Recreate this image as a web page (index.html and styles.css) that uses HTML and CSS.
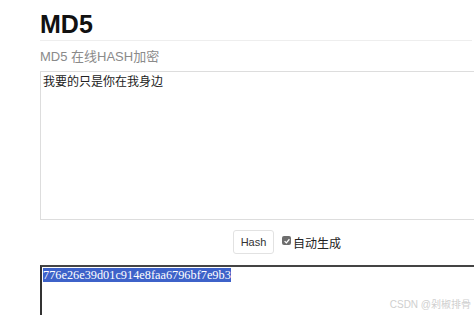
FILE: index.html
```html
<!DOCTYPE html>
<html>
<head>
<meta charset="utf-8">
<link rel="stylesheet" href="styles.css">
</head>
<body>
<div class="page">
  <h1 class="title">MD5</h1>
  <div class="rule"></div>
  <p class="subtitle">MD5 在线HASH加密</p>
  <div class="input-box">我要的只是你在我身边</div>
  <div class="controls">
    <button class="btn">Hash</button>
    <label class="auto"><span class="check"><svg viewBox="0 0 10 10" width="8" height="8"><path d="M2 5.2 L4.2 7.3 L8 2.8" fill="none" stroke="#fff" stroke-width="1.6"/></svg></span>自动生成</label>
  </div>
  <div class="output-box"><span class="sel">776e26e39d01c914e8faa6796bf7e9b3</span></div>
</div>
<div class="watermark">CSDN @剁椒排骨</div>
</body>
</html>
```
FILE: styles.css
```css
html, body {
  margin: 0;
  padding: 0;
  background: #fff;
  overflow: hidden;
  width: 474px;
  height: 315px;
}
body {
  position: relative;
  font-family: "Liberation Sans", "Noto Sans CJK SC", sans-serif;
}
.page {
  padding-left: 40px;
  display: flex;
  flex-direction: column;
}
.title {
  margin: 11px 0 0 0;
  font-size: 25px;
  line-height: 26px;
  font-weight: bold;
  color: #111;
}
.rule {
  margin-top: 3px;
  width: 432px;
  height: 1px;
  background: #eeeeee;
}
.subtitle {
  margin: 8px 0 0 0;
  font-size: 13px;
  line-height: 16px;
  color: #8a8a8a;
}
.input-box {
  margin-top: 6px;
  width: 440px;
  border: 1px solid #dddddd;
  border-right: none;
  padding: 3px 2px;
  box-sizing: border-box;
  height: 149px;
  font-family: "Liberation Serif", "Noto Sans CJK SC", serif;
  font-size: 12px;
  line-height: 14px;
  color: #222;
}
.controls {
  display: flex;
  align-items: center;
  margin-top: 10px;
  padding-left: 193px;
  height: 24px;
}
.btn {
  width: 41px;
  height: 24px;
  padding: 0;
  border: 1px solid #e2e2e2;
  border-radius: 3px;
  background: #fff;
  font-family: "Liberation Sans", sans-serif;
  font-size: 11px;
  color: #333;
}
.auto {
  display: flex;
  align-items: center;
  margin-left: 8px;
  font-size: 12px;
  color: #222;
}
.check {
  display: inline-flex;
  align-items: center;
  justify-content: center;
  width: 9px;
  height: 9px;
  background: #6e6e6e;
  border-radius: 2px;
  margin-right: 2px;
  margin-top: -3px;
}
.output-box {
  margin-top: 11px;
  width: 440px;
  height: 60px;
  border-top: 2px solid #444;
  border-left: 2px solid #333;
  padding: 1px 1px;
  font-family: "Liberation Serif", serif;
  font-size: 12.3px;
  line-height: 14px;
}
.sel {
  background: #3d62c9;
  color: #fff;
}
.watermark {
  position: absolute;
  right: 3px;
  bottom: 4px;
  font-size: 10px;
  color: #cfcfcf;
}
```
